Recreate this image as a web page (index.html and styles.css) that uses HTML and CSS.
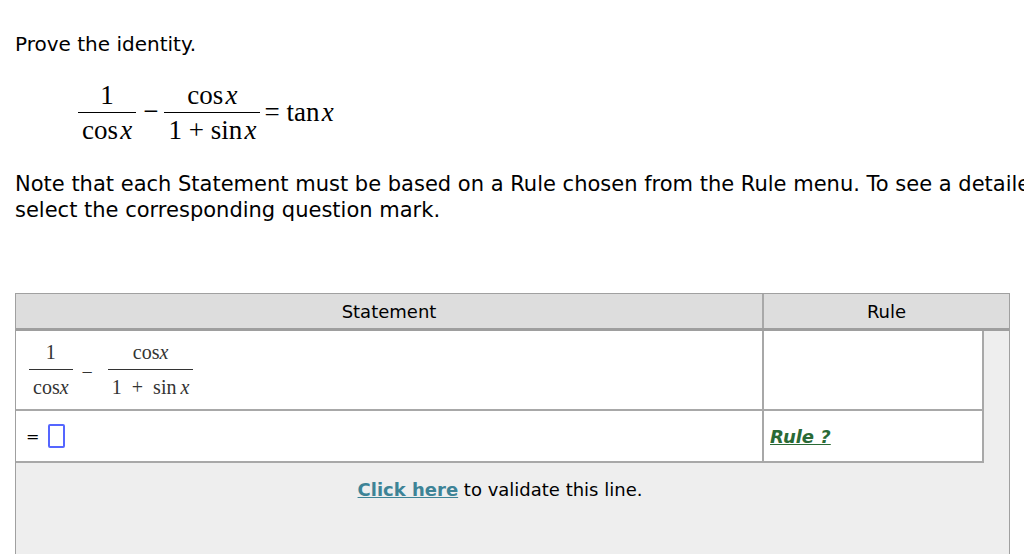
FILE: index.html
```html
<!DOCTYPE html>
<html lang="en">
<head>
  <meta charset="UTF-8">
  <title>Prove the identity</title>
  <link rel="stylesheet" href="styles.css">
</head>
<body>
<div class="page">
  <p class="prompt">Prove the identity.</p>

  <div class="equation">
    <span class="frac">
      <span class="num">1</span>
      <span class="den">cos&#8202;<i>x</i></span>
    </span>
    <span class="op">&minus;</span>
    <span class="frac">
      <span class="num">cos&#8202;<i>x</i></span>
      <span class="den">1 + sin&#8202;<i>x</i></span>
    </span>
    <span class="eq">= tan&#8202;<i>x</i></span>
  </div>

  <p class="note">Note that each Statement must be based on a Rule chosen from the Rule menu. To see a detailed description of a Rule,<br>select the corresponding question mark.</p>

  <div class="proof">
    <table class="proof-head">
      <tr>
        <th class="col-statement">Statement</th>
        <th class="col-rule">Rule</th>
      </tr>
    </table>
    <table class="proof-body">
      <tr class="row-given">
        <td class="col-statement">
          <div class="small-eq">
            <span class="frac">
              <span class="num">1</span>
              <span class="den">cos<i>x</i></span>
            </span>
            <span class="op">&minus;</span>
            <span class="frac">
              <span class="num">cos<i>x</i></span>
              <span class="den">1 &nbsp;+ &nbsp;sin&thinsp;<i>x</i></span>
            </span>
          </div>
        </td>
        <td class="col-rule"></td>
      </tr>
      <tr class="row-input">
        <td class="col-statement">
          <span class="equals">=</span>
          <span class="input-box"></span>
        </td>
        <td class="col-rule"><a href="#" class="rule-link">Rule ?</a></td>
      </tr>
    </table>
    <div class="validate">
      <a href="#" class="validate-link">Click here</a> to validate this line.
    </div>
  </div>
</div>
</body>
</html>
```

FILE: styles.css
```css
html, body {
  margin: 0;
  padding: 0;
  overflow: hidden;
}

body {
  font-family: 'DejaVu Sans', Verdana, sans-serif;
  color: #000;
  background: white;
  width: 1024px;
  height: 554px;
}

.page {
  padding: 30px 0 0 15px;
  width: 1300px;
}

.prompt {
  font-size: 20px;
  margin: 0;
  line-height: 28px;
}

.equation {
  font-family: 'Liberation Serif', 'Times New Roman', serif;
  font-size: 27px;
  display: flex;
  align-items: center;
  margin: 22px 0 0 60px;
}

.frac {
  display: inline-flex;
  flex-direction: column;
  align-items: center;
  padding: 0 3px;
}

.frac .num {
  border-bottom: 1px solid #000;
  padding: 0 4px 1px;
  align-self: stretch;
  text-align: center;
  line-height: 31px;
}

.frac .den {
  line-height: 34px;
  padding: 0 4px;
}

.equation .op {
  padding: 0 3px 0 4px;
  margin-top: -4px;
}

.equation .eq {
  margin-top: -3px;
  margin-left: 1px;
}

.note {
  font-size: 21px;
  line-height: 26px;
  margin: 24px 0 0;
}

.proof {
  margin-top: 70px;
  width: 993px;
  border: 1px solid #a0a0a0;
  border-bottom: none;
  background: #eeeeee;
  height: 400px;
}

table {
  border-collapse: collapse;
}

.proof-head {
  width: 100%;
  background: #dddddd;
  border-bottom: 3px solid #9e9e9e;
}

.proof-head th {
  font-weight: normal;
  font-size: 18px;
  height: 34px;
  padding: 0;
}

.proof-head .col-statement {
  width: 746px;
  border-right: 2px solid #a8a8a8;
}

.proof-body {
  width: 968px;
  background: white;
}

.proof-body td {
  border-bottom: 2px solid #a8a8a8;
  padding: 0;
  vertical-align: middle;
}

.proof-body .col-statement {
  width: 736px;
  border-right: 2px solid #a8a8a8;
  padding-left: 10px;
}

.proof-body .col-rule {
  border-right: 2px solid #a8a8a8;
  padding-left: 6px;
}

.row-given td {
  height: 78px;
}

.row-input td {
  height: 50px;
}

.small-eq {
  font-family: 'Liberation Serif', 'Times New Roman', serif;
  font-size: 20px;
  display: flex;
  align-items: center;
  color: #333;
  margin-top: 2px;
}

.small-eq .frac .num {
  border-bottom: 1px solid #333;
  line-height: 26px;
  padding-bottom: 4px;
}

.small-eq .frac .den {
  line-height: 34px;
}

.small-eq .op {
  padding: 0 12px 0 6px;
  margin-top: 2px;
}

.equals {
  font-size: 16px;
  vertical-align: middle;
}

.input-box {
  display: inline-block;
  width: 13px;
  height: 20px;
  border: 2px solid #5566ff;
  border-radius: 2px;
  vertical-align: middle;
  margin-left: 3px;
}

.rule-link {
  color: #2a6a36;
  font-weight: bold;
  font-style: italic;
  font-size: 18px;
}

.validate {
  width: 968px;
  text-align: center;
  font-size: 18px;
  padding-top: 16px;
}

.validate-link {
  color: #3d8396;
  font-weight: bold;
}
```
